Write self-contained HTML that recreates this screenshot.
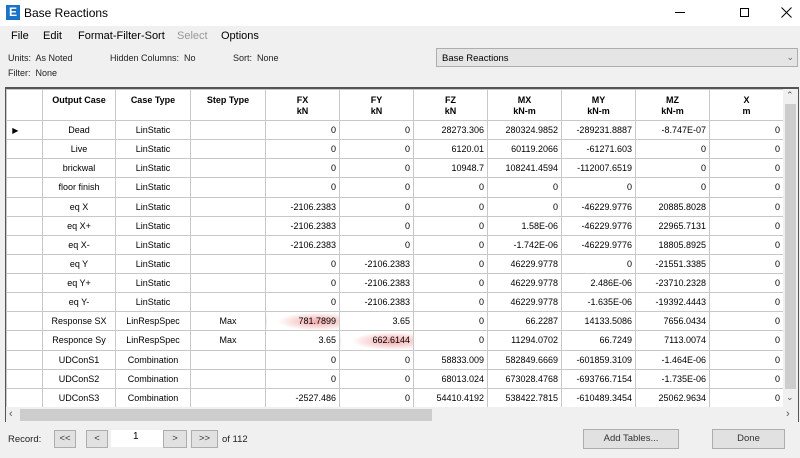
<!DOCTYPE html>
<html><head><meta charset="utf-8"><style>
*{margin:0;padding:0;box-sizing:border-box}
body{width:800px;height:458px;background:#f0f0f0;font-family:"Liberation Sans",sans-serif;position:relative;overflow:hidden;color:#000}
.tb{position:absolute;left:0;top:0;width:800px;height:26px;background:#fff}
.ic{position:absolute;left:6px;top:5px;width:14px;height:15px;background:#1a73c6;color:#fff;font-weight:bold;font-size:12px;text-align:center;line-height:15px}
.tt{position:absolute;left:24px;top:6px;font-size:12px}
.menu{position:absolute;top:30px;font-size:11px}
.s{position:absolute;font-size:9px;color:#222}
.dd{position:absolute;left:436px;top:48px;width:362px;height:19px;border:1px solid #adadad;background:#e5e5e5;font-size:9.5px;padding:4px 0 0 5px}
.grid{position:absolute;left:5px;top:87px;width:794px;height:335px;border:1px solid #555;border-top:2px solid #555;background:#fff}
table{position:absolute;left:0;top:0;border-collapse:collapse;table-layout:fixed;font-size:9px}
td{border:1px solid #c8c8c8;height:19.14px;padding:0 3px;white-space:nowrap;overflow:hidden}
thead td{height:31px;font-weight:bold;text-align:center;vertical-align:top;padding-top:5px;line-height:11px}
td.c{text-align:center}td.r{text-align:right}
.hl{background:radial-gradient(ellipse 40px 9px at 70% 50%,#f3a8a8,#fbe3e3 70%,#fff 100%)}
.vs{position:absolute;left:777px;top:0;width:15px;height:318px;background:#f0f0f0}
.hs{position:absolute;left:0;top:318px;width:792px;height:16px;background:#f0f0f0}
.btn{position:absolute;height:18px;border:1px solid #adadad;background:#e1e1e1;font-size:9.5px;text-align:center;line-height:16px;color:#333}
</style></head><body>
<div class="tb"><div class="ic">E</div><div class="tt">Base Reactions</div>
<div style="position:absolute;left:675px;top:12px;width:10px;height:1px;background:#000"></div>
<div style="position:absolute;left:740px;top:8px;width:9px;height:9px;border:1px solid #000"></div>
<svg style="position:absolute;left:781px;top:7px" width="11" height="11"><path d="M0.5 0.5L10.5 10.5M10.5 0.5L0.5 10.5" stroke="#000" stroke-width="1"/></svg></div>
<div class="menu" style="left:11px">File</div><div class="menu" style="left:43px">Edit</div>
<div class="menu" style="left:78px">Format-Filter-Sort</div><div class="menu" style="left:177px;color:#999">Select</div>
<div class="menu" style="left:221px">Options</div>
<div class="s" style="left:8px;top:53px">Units:&nbsp; As Noted</div>
<div class="s" style="left:110px;top:53px">Hidden Columns:&nbsp; No</div>
<div class="s" style="left:233px;top:53px">Sort:&nbsp; None</div>
<div class="s" style="left:8px;top:68px">Filter:&nbsp; None</div>
<div class="dd">Base Reactions<span style="position:absolute;right:3px;top:3px;font-size:9px;color:#666">⌄</span></div>
<div class="grid">
<table>
<colgroup><col style="width:36px"><col style="width:73px"><col style="width:75px"><col style="width:75px"><col style="width:74px"><col style="width:74px"><col style="width:74px"><col style="width:74px"><col style="width:74px"><col style="width:74px"><col style="width:74px"></colgroup>
<thead><tr><td></td><td>Output Case</td><td>Case Type</td><td>Step Type</td><td>FX<br>kN</td><td>FY<br>kN</td><td>FZ<br>kN</td><td>MX<br>kN-m</td><td>MY<br>kN-m</td><td>MZ<br>kN-m</td><td>X<br>m</td></tr></thead>
<tbody>
<tr><td style="font-size:8px">&nbsp;▶</td><td class="c">Dead</td><td class="c">LinStatic</td><td></td><td class="r">0</td><td class="r">0</td><td class="r">28273.306</td><td class="r">280324.9852</td><td class="r">-289231.8887</td><td class="r">-8.747E-07</td><td class="r">0</td></tr>
<tr><td></td><td class="c">Live</td><td class="c">LinStatic</td><td></td><td class="r">0</td><td class="r">0</td><td class="r">6120.01</td><td class="r">60119.2066</td><td class="r">-61271.603</td><td class="r">0</td><td class="r">0</td></tr>
<tr><td></td><td class="c">brickwal</td><td class="c">LinStatic</td><td></td><td class="r">0</td><td class="r">0</td><td class="r">10948.7</td><td class="r">108241.4594</td><td class="r">-112007.6519</td><td class="r">0</td><td class="r">0</td></tr>
<tr><td></td><td class="c">floor finish</td><td class="c">LinStatic</td><td></td><td class="r">0</td><td class="r">0</td><td class="r">0</td><td class="r">0</td><td class="r">0</td><td class="r">0</td><td class="r">0</td></tr>
<tr><td></td><td class="c">eq X</td><td class="c">LinStatic</td><td></td><td class="r">-2106.2383</td><td class="r">0</td><td class="r">0</td><td class="r">0</td><td class="r">-46229.9776</td><td class="r">20885.8028</td><td class="r">0</td></tr>
<tr><td></td><td class="c">eq X+</td><td class="c">LinStatic</td><td></td><td class="r">-2106.2383</td><td class="r">0</td><td class="r">0</td><td class="r">1.58E-06</td><td class="r">-46229.9776</td><td class="r">22965.7131</td><td class="r">0</td></tr>
<tr><td></td><td class="c">eq X-</td><td class="c">LinStatic</td><td></td><td class="r">-2106.2383</td><td class="r">0</td><td class="r">0</td><td class="r">-1.742E-06</td><td class="r">-46229.9776</td><td class="r">18805.8925</td><td class="r">0</td></tr>
<tr><td></td><td class="c">eq Y</td><td class="c">LinStatic</td><td></td><td class="r">0</td><td class="r">-2106.2383</td><td class="r">0</td><td class="r">46229.9778</td><td class="r">0</td><td class="r">-21551.3385</td><td class="r">0</td></tr>
<tr><td></td><td class="c">eq Y+</td><td class="c">LinStatic</td><td></td><td class="r">0</td><td class="r">-2106.2383</td><td class="r">0</td><td class="r">46229.9778</td><td class="r">2.486E-06</td><td class="r">-23710.2328</td><td class="r">0</td></tr>
<tr><td></td><td class="c">eq Y-</td><td class="c">LinStatic</td><td></td><td class="r">0</td><td class="r">-2106.2383</td><td class="r">0</td><td class="r">46229.9778</td><td class="r">-1.635E-06</td><td class="r">-19392.4443</td><td class="r">0</td></tr>
<tr><td></td><td class="c">Response SX</td><td class="c">LinRespSpec</td><td class="c">Max</td><td class="r hl">781.7899</td><td class="r">3.65</td><td class="r">0</td><td class="r">66.2287</td><td class="r">14133.5086</td><td class="r">7656.0434</td><td class="r">0</td></tr>
<tr><td></td><td class="c">Responce Sy</td><td class="c">LinRespSpec</td><td class="c">Max</td><td class="r">3.65</td><td class="r hl">662.6144</td><td class="r">0</td><td class="r">11294.0702</td><td class="r">66.7249</td><td class="r">7113.0074</td><td class="r">0</td></tr>
<tr><td></td><td class="c">UDConS1</td><td class="c">Combination</td><td></td><td class="r">0</td><td class="r">0</td><td class="r">58833.009</td><td class="r">582849.6669</td><td class="r">-601859.3109</td><td class="r">-1.464E-06</td><td class="r">0</td></tr>
<tr><td></td><td class="c">UDConS2</td><td class="c">Combination</td><td></td><td class="r">0</td><td class="r">0</td><td class="r">68013.024</td><td class="r">673028.4768</td><td class="r">-693766.7154</td><td class="r">-1.735E-06</td><td class="r">0</td></tr>
<tr><td></td><td class="c">UDConS3</td><td class="c">Combination</td><td></td><td class="r">-2527.486</td><td class="r">0</td><td class="r">54410.4192</td><td class="r">538422.7815</td><td class="r">-610489.3454</td><td class="r">25062.9634</td><td class="r">0</td></tr>
</tbody></table>
<div class="vs"><div style="position:absolute;left:3px;top:1px;font-size:9px;color:#555">⌃</div>
<div style="position:absolute;left:2px;top:15px;width:11px;height:285px;background:#cdcdcd"></div>
<div style="position:absolute;left:3px;top:303px;font-size:9px;color:#555">⌄</div></div>
<div class="hs"><div style="position:absolute;left:3px;top:1px;font-size:11px;color:#555">‹</div>
<div style="position:absolute;left:14px;top:2px;width:412px;height:12px;background:#cdcdcd"></div>
<div style="position:absolute;left:780px;top:1px;font-size:11px;color:#555">›</div></div>
</div>
<div class="s" style="left:8px;top:434px;font-size:9.5px">Record:</div>
<div class="btn" style="left:54px;top:430px;width:22px">&lt;&lt;</div>
<div class="btn" style="left:86px;top:430px;width:22px">&lt;</div>
<div style="position:absolute;left:111px;top:430px;width:52px;height:17px;background:#fff;font-size:10px;padding:1px 0 0 22px">1</div>
<div class="btn" style="left:163px;top:430px;width:24px">&gt;</div>
<div class="btn" style="left:191px;top:430px;width:27px">&gt;&gt;</div>
<div class="s" style="left:222px;top:434px;font-size:9.5px">of 112</div>
<div class="btn" style="left:583px;top:429px;width:96px;height:20px;line-height:18px">Add Tables...</div>
<div class="btn" style="left:712px;top:429px;width:73px;height:20px;line-height:18px">Done</div>
</body></html>
